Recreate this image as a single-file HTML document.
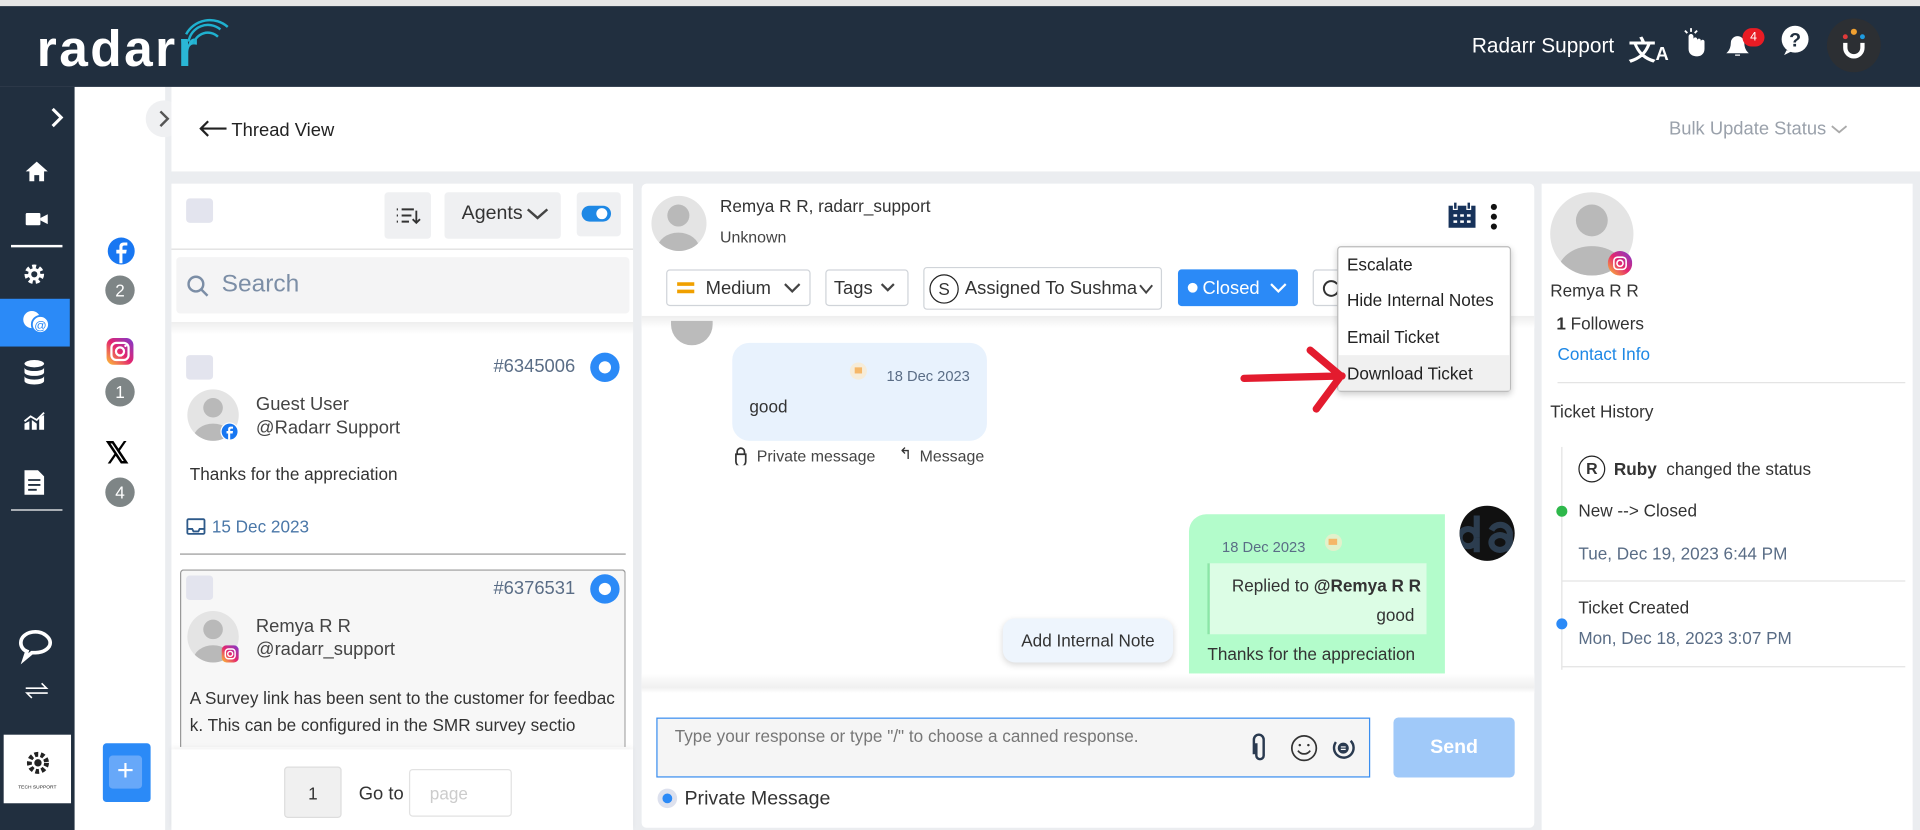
<!DOCTYPE html>
<html><head><meta charset="utf-8">
<style>
*{box-sizing:border-box;margin:0;padding:0}
html,body{width:1920px;height:830px;overflow:hidden;background:#ebedf0;font-family:"Liberation Sans",sans-serif}
#w{position:absolute;left:0;top:0;width:1568px;height:678px;transform:scale(1.22449);transform-origin:0 0;background:#ebedf0;color:#333}
.a{position:absolute}
.top{left:0;top:0;width:1568px;height:5px;background:#e6e6e6}
.hdr{left:0;top:5px;width:1568px;height:66px;background:#212f3f}
.side{left:0;top:71px;width:61px;height:607px;background:#212f3f}
.col2{left:61px;top:71px;width:74px;height:607px;background:#fff}
.bar{left:140px;top:71px;width:1428px;height:69px;background:#fff}
.panel{background:#fff}
.btn{border:1px solid #d0d4d9;border-radius:3px;background:#fff;height:30px;font-size:15px;display:flex;align-items:center;padding:0 6px}
.chk{width:22px;height:20px;background:#e3e4ee;border-radius:3px}
.radio{width:24px;height:24px;border-radius:50%;background:#2b8af7;display:flex;align-items:center;justify-content:center}
.radio i{width:10px;height:10px;border-radius:50%;background:#fff}
.av{border-radius:50%;background:#e4e4e4;overflow:hidden}
.badge{width:24px;height:24px;border-radius:50%;background:#7e8586;color:#fff;font-size:14px;text-align:center;line-height:24px}
</style></head><body><div id="w">
<div class="a top"></div>
<div class="a hdr"></div>
<div class="a" style="left:30px;top:18px;color:#fff;font-size:42px;font-weight:bold;letter-spacing:2px;line-height:44px">radar<span style="color:#2ab7d6">r</span></div>
<svg class="a" style="left:150px;top:14px" width="44" height="24"><path d="M4 20a16 16 0 0 1 26-10M8 22a12 12 0 0 1 20-6M2 14a22 22 0 0 1 34-6" stroke="#1fb1cf" stroke-width="2" fill="none"/></svg>
<div class="a" style="left:1202px;top:28px;color:#fff;font-size:17px">Radarr Support</div>
<div class="a" style="left:1330px;top:24px;color:#fff;font-size:22px;font-weight:bold">文<span style="font-size:15px">A</span></div>
<svg class="a" style="left:1373px;top:20px" width="22" height="28"><path d="M6 10v10c0 4 3 6 7 6s6-3 6-6v-6c0-2-3-2-3 0v-1c0-2-3-2-3 0v-1c0-2-3-2-3 0V10c0-3-4-3-4 0z" fill="#fff"/><path d="M8 3v3M3 5l2 2M13 5l-2 2" stroke="#fff" stroke-width="1.5"/></svg>
<svg class="a" style="left:1408px;top:24px" width="24" height="24"><path d="M3 19h16c-2-2-3-4-3-8a5 5 0 0 0-10 0c0 4-1 6-3 8zM9 21h4" fill="#fff" stroke="#fff"/></svg>
<div class="a" style="left:1423px;top:23px;width:18px;height:15px;border-radius:8px;background:#e91c24;color:#fff;font-size:10px;text-align:center;line-height:15px">4</div>
<svg class="a" style="left:1453px;top:20px" width="26" height="26"><circle cx="13" cy="12" r="11" fill="#fff"/><path d="M6 21l-2 4 6-3z" fill="#fff"/><text x="13" y="18" font-size="16" font-weight="bold" text-anchor="middle" fill="#212f3f" font-family="Liberation Sans">?</text></svg>
<div class="a" style="left:1492px;top:15px;width:44px;height:44px;border-radius:50%;background:#2c2f33"></div>
<svg class="a" style="left:1502px;top:22px" width="24" height="30"><circle cx="12" cy="4" r="2.5" fill="#f0a030"/><circle cx="5" cy="8" r="2" fill="#e03a3a"/><circle cx="19" cy="8" r="2" fill="#1e9be0"/><path d="M5 13v4a7 7 0 0 0 14 0v-4" stroke="#fff" stroke-width="3.5" fill="none"/></svg>

<div class="a side"></div>
<svg class="a" style="left:40px;top:86px" width="14" height="20"><path d="M3 3l7 7-7 7" stroke="#fff" stroke-width="2.5" fill="none"/></svg>
<svg class="a" style="left:20px;top:131px" width="20" height="18"><path d="M10 1L1 9h3v8h4v-5h4v5h4V9h3z" fill="#fff"/></svg>
<svg class="a" style="left:20px;top:172px" width="20" height="14"><rect x="1" y="2" width="12" height="10" rx="1" fill="#fff"/><path d="M13 6l6-3v8l-6-3z" fill="#fff"/></svg>
<div class="a" style="left:9px;top:200px;width:42px;height:2px;background:#fff"></div>
<svg class="a" style="left:18px;top:214px" width="20" height="20"><circle cx="10" cy="10" r="6" fill="none" stroke="#fff" stroke-width="4" stroke-dasharray="3 2.3"/><circle cx="10" cy="10" r="5" fill="#fff"/><circle cx="10" cy="10" r="2.5" fill="#212f3f"/></svg>
<div class="a" style="left:0;top:244px;width:57px;height:39px;background:#2b8af7"></div>
<svg class="a" style="left:17px;top:252px" width="26" height="22"><circle cx="9" cy="9" r="7" fill="#fff"/><circle cx="16" cy="13" r="7" fill="#fff" stroke="#2b8af7" stroke-width="1.5"/><text x="16" y="17" font-size="10" text-anchor="middle" fill="#2b8af7" font-family="Liberation Sans">@</text></svg>
<svg class="a" style="left:18px;top:293px" width="20" height="22"><ellipse cx="10" cy="4" rx="8" ry="3" fill="#fff"/><path d="M2 7c0 4 16 4 16 0v4c0 4-16 4-16 0zM2 14c0 4 16 4 16 0v4c0 4-16 4-16 0z" fill="#fff"/></svg>
<svg class="a" style="left:18px;top:333px" width="20" height="20"><path d="M2 18V13l4-2v7zM8 18V10l4 3v5zM14 18V8l4-2v12z" fill="#fff"/><path d="M2 11l5-4 5 3 6-6" stroke="#fff" stroke-width="1.5" fill="none"/></svg>
<svg class="a" style="left:19px;top:383px" width="18" height="22"><path d="M1 1h11l5 5v15H1z" fill="#fff"/><path d="M4 9h10M4 13h10M4 17h7" stroke="#212f3f" stroke-width="1.5"/></svg>
<div class="a" style="left:9px;top:416px;width:42px;height:1px;background:#fff"></div>
<svg class="a" style="left:14px;top:513px" width="30" height="30"><path d="M15 3C8 3 3 7 3 12c0 3 2 6 5 7l-2 6 6-5c1 0 2 0 3 0 7 0 12-4 12-8S22 3 15 3z" fill="none" stroke="#fff" stroke-width="3"/></svg>
<svg class="a" style="left:20px;top:556px" width="20" height="16"><path d="M1 6h17l-4-4M19 10H2l4 4" stroke="#fff" stroke-width="1.3" fill="none"/></svg>
<div class="a" style="left:3px;top:600px;width:55px;height:56px;background:#fff"></div>
<svg class="a" style="left:18px;top:610px" width="26" height="26"><circle cx="13" cy="13" r="7" fill="none" stroke="#222" stroke-width="4" stroke-dasharray="3 2"/><circle cx="13" cy="13" r="3" fill="#222"/></svg>
<div class="a" style="left:3px;top:640px;width:55px;text-align:center;font-size:4px;color:#222">TECH SUPPORT</div>

<div class="a col2"></div>
<div class="a" style="left:135px;top:71px;width:5px;height:607px;background:#ebedf0"></div>
<div class="a" style="left:119px;top:82px;width:30px;height:30px;border-radius:50%;background:#eff0f2"></div>
<svg class="a" style="left:127px;top:89px" width="14" height="16"><path d="M4 2l6 6-6 6" stroke="#555" stroke-width="2" fill="none"/></svg>
<svg class="a" style="left:87px;top:193px" width="24" height="24"><circle cx="12" cy="12" r="11" fill="#1877f2"/><path d="M13 22v-8h3l.5-3H13V9c0-1 .5-1.5 1.5-1.5H17V5h-3c-2.5 0-3.5 1.5-3.5 3.5V11H8v3h2.5v8z" fill="#fff"/></svg>
<div class="a badge" style="left:86px;top:225px">2</div>
<svg class="a" style="left:87px;top:276px" width="22" height="22"><defs><linearGradient id="ig" x1="0" y1="1" x2="1" y2="0"><stop offset="0" stop-color="#fdc435"/><stop offset=".5" stop-color="#e3266f"/><stop offset="1" stop-color="#7b3ad2"/></linearGradient></defs><rect width="22" height="22" rx="6" fill="url(#ig)"/><rect x="4" y="4" width="14" height="14" rx="4" fill="none" stroke="#fff" stroke-width="1.8"/><circle cx="11" cy="11" r="3.3" fill="none" stroke="#fff" stroke-width="1.8"/><circle cx="15.5" cy="6.5" r="1" fill="#fff"/></svg>
<div class="a badge" style="left:86px;top:308px">1</div>
<div class="a" style="left:86px;top:356px;font-size:24px;font-weight:bold;color:#000">𝕏</div>
<div class="a badge" style="left:86px;top:390px">4</div>
<div class="a" style="left:84px;top:607px;width:39px;height:48px;background:#2b8af7;border-radius:3px"></div>
<div class="a" style="left:89px;top:617px;width:27px;height:27px;background:#67a8f9;border-radius:3px;color:#fff;font-size:24px;text-align:center;line-height:26px">+</div>

<div class="a bar"></div>
<svg class="a" style="left:161px;top:98px" width="26" height="14"><path d="M24 7H3M9 1L3 7l6 6" stroke="#222" stroke-width="1.8" fill="none"/></svg>
<div class="a" style="left:189px;top:98px;font-size:15px;color:#222">Thread View</div>
<div class="a" style="left:1363px;top:97px;font-size:15px;color:#9aa1ab">Bulk Update Status</div>
<svg class="a" style="left:1494px;top:101px" width="16" height="10"><path d="M2 2l6 5 6-5" stroke="#aaa" stroke-width="1.5" fill="none"/></svg>

<div class="a panel" style="left:140px;top:150px;width:377px;height:528px"></div>
<div class="a chk" style="left:152px;top:162px"></div>
<div class="a" style="left:314px;top:157px;width:38px;height:38px;background:#eff0f2;border-radius:3px"></div>
<svg class="a" style="left:322px;top:168px" width="22" height="16"><path d="M2 3h1M6 3h10M2 8h1M6 8h8M2 13h1M6 13h6" stroke="#333" stroke-width="1.6"/><path d="M18 4v10M15 11l3 3 3-3" stroke="#333" stroke-width="1.5" fill="none"/></svg>
<div class="a" style="left:363px;top:157px;width:95px;height:38px;background:#eff0f2;border-radius:3px;font-size:16px;padding:9px 14px;color:#333">Agents</div>
<svg class="a" style="left:429px;top:168px" width="20" height="14"><path d="M2 3l8 7 8-7" stroke="#444" stroke-width="2" fill="none"/></svg>
<div class="a" style="left:471px;top:157px;width:36px;height:36px;background:#eff0f2;border-radius:3px"></div>
<div class="a" style="left:475px;top:168px;width:24px;height:13px;border-radius:7px;background:#1e88e5"></div>
<div class="a" style="left:487px;top:170px;width:9px;height:9px;border-radius:50%;background:#fff"></div>
<div class="a" style="left:140px;top:203px;width:377px;height:1px;background:#ddd"></div>
<div class="a" style="left:144px;top:210px;width:370px;height:46px;background:#f4f4f5;border-radius:3px"></div>
<svg class="a" style="left:152px;top:224px" width="20" height="20"><circle cx="8" cy="8" r="6" stroke="#7c8ea6" stroke-width="2" fill="none"/><path d="M12.5 12.5l5 5" stroke="#7c8ea6" stroke-width="2"/></svg>
<div class="a" style="left:181px;top:221px;font-size:20px;color:#7c8ea6">Search</div>
<div class="a" style="left:140px;top:263px;width:377px;height:10px;background:linear-gradient(#eee,#fff)"></div>

<div class="a chk" style="left:152px;top:290px"></div>
<div class="a" style="left:403px;top:291px;font-size:15px;color:#5a6d86">#6345006</div>
<div class="a radio" style="left:482px;top:288px"><i></i></div>
<div class="a av" style="left:153px;top:318px;width:42px;height:42px"><svg width="42" height="42"><circle cx="21" cy="15" r="8" fill="#b9b9b9"/><ellipse cx="21" cy="40" rx="16" ry="12" fill="#b9b9b9"/></svg></div>
<svg class="a" style="left:180px;top:345px" width="15" height="15"><circle cx="7.5" cy="7.5" r="7" fill="#1877f2" stroke="#fff"/><path d="M8 14V9h2l.3-2H8V6c0-.6.3-1 1-1h1.3V3.4H8.6C7 3.4 6.3 4.3 6.3 5.6V7H5v2h1.3v5z" fill="#fff"/></svg>
<div class="a" style="left:209px;top:321px;font-size:15px;color:#444;line-height:19px">Guest User<br>@Radarr Support</div>
<div class="a" style="left:155px;top:379px;font-size:14px;color:#333">Thanks for the appreciation</div>
<svg class="a" style="left:152px;top:422px" width="16" height="16"><rect x="1" y="2" width="14" height="12" rx="1" fill="none" stroke="#2e5a8a" stroke-width="1.5"/><path d="M1 10h4l1 2h4l1-2h4" stroke="#2e5a8a" stroke-width="1.5" fill="none"/></svg>
<div class="a" style="left:173px;top:422px;font-size:14px;color:#4a77a8">15 Dec 2023</div>
<div class="a" style="left:147px;top:452px;width:364px;height:1px;background:#999"></div>
<div class="a" style="left:147px;top:465px;width:364px;height:145px;border:1px solid #999;border-bottom:none;border-radius:3px 3px 0 0;background:#f7f7f7"></div>
<div class="a chk" style="left:152px;top:470px"></div>
<div class="a" style="left:403px;top:472px;font-size:15px;color:#5a6d86">#6376531</div>
<div class="a radio" style="left:482px;top:469px"><i></i></div>
<div class="a av" style="left:153px;top:499px;width:42px;height:42px"><svg width="42" height="42"><circle cx="21" cy="15" r="8" fill="#b9b9b9"/><ellipse cx="21" cy="40" rx="16" ry="12" fill="#b9b9b9"/></svg></div>
<svg class="a" style="left:181px;top:527px" width="14" height="14"><rect width="14" height="14" rx="4" fill="url(#ig)"/><rect x="3" y="3" width="8" height="8" rx="2.5" fill="none" stroke="#fff" stroke-width="1.2"/><circle cx="7" cy="7" r="2" fill="none" stroke="#fff" stroke-width="1.2"/></svg>
<div class="a" style="left:209px;top:502px;font-size:15px;color:#444;line-height:19px">Remya R R<br>@radarr_support</div>
<div class="a" style="left:155px;top:559px;font-size:14px;color:#333;line-height:22px;width:355px;word-break:break-all">A Survey link has been sent to the customer for feedback. This can be configured in the SMR survey sectio</div>
<div class="a" style="left:140px;top:612px;width:377px;height:66px;background:#fff;box-shadow:0 -2px 4px rgba(0,0,0,.05)"></div>
<div class="a" style="left:232px;top:626px;width:47px;height:42px;border:1px solid #ddd;background:#f0f0f0;border-radius:3px;text-align:center;line-height:42px;font-size:14px">1</div>
<div class="a" style="left:293px;top:640px;font-size:15px;color:#333">Go to</div>
<div class="a" style="left:334px;top:628px;width:84px;height:39px;border:1px solid #e2e2e2;border-radius:3px;font-size:14px;color:#ccc;padding:11px 16px">page</div>

<div class="a panel" style="left:524px;top:150px;width:729px;height:526px;border-radius:4px"></div>
<div class="a av" style="left:532px;top:160px;width:45px;height:45px"><svg width="45" height="45"><circle cx="22" cy="16" r="9" fill="#b9b9b9"/><ellipse cx="22" cy="43" rx="17" ry="13" fill="#b9b9b9"/></svg></div>
<div class="a" style="left:588px;top:160px;font-size:14px;color:#333">Remya R R, radarr_support</div>
<div class="a" style="left:588px;top:186px;font-size:13px;color:#444">Unknown</div>
<svg class="a" style="left:1182px;top:164px" width="26" height="24"><rect x="1" y="4" width="22" height="18" fill="#17325a"/><rect x="5" y="1" width="3" height="6" fill="#17325a" stroke="#fff"/><rect x="16" y="1" width="3" height="6" fill="#17325a" stroke="#fff"/><g fill="#fff"><rect x="5" y="11" width="3" height="2"/><rect x="10.5" y="11" width="3" height="2"/><rect x="16" y="11" width="3" height="2"/><rect x="5" y="16" width="3" height="2"/><rect x="10.5" y="16" width="3" height="2"/><rect x="16" y="16" width="3" height="2"/></g></svg>
<svg class="a" style="left:1216px;top:165px" width="8" height="24"><circle cx="4" cy="4" r="2.5" fill="#111"/><circle cx="4" cy="12" r="2.5" fill="#111"/><circle cx="4" cy="20" r="2.5" fill="#111"/></svg>
<div class="a btn" style="left:544px;top:220px;width:118px">
<svg width="20" height="16" style="margin-right:6px"><path d="M2 5h14M2 11h14" stroke="#f0a000" stroke-width="3"/></svg>Medium<svg width="18" height="12" style="margin-left:8px"><path d="M3 3l6 6 6-6" stroke="#444" stroke-width="1.8" fill="none"/></svg></div>
<div class="a btn" style="left:674px;top:220px;width:68px">Tags<svg width="16" height="12" style="margin-left:4px"><path d="M3 3l5 5 5-5" stroke="#444" stroke-width="1.8" fill="none"/></svg></div>
<div class="a btn" style="left:754px;top:218px;width:195px;height:35px;padding:0 4px"><span style="width:24px;height:24px;border:1.2px solid #222;border-radius:50%;text-align:center;line-height:22px;margin-right:5px;font-size:14px">S</span>Assigned To Sushma<svg width="14" height="12"><path d="M2 3l5 6 5-6" stroke="#444" stroke-width="1.6" fill="none"/></svg></div>
<div class="a" style="left:962px;top:220px;width:98px;height:30px;border-radius:3px;background:#2b8af7;color:#fff;font-size:15px;display:flex;align-items:center;padding-left:8px"><span style="width:8px;height:8px;border-radius:50%;background:#fff;margin-right:4px"></span>Closed<svg width="18" height="12" style="margin-left:6px"><path d="M3 3l6 6 6-6" stroke="#fff" stroke-width="1.8" fill="none"/></svg></div>
<div class="a btn" style="left:1072px;top:220px;width:30px"><svg width="16" height="16"><path d="M13 5a6 6 0 1 0 1 5" stroke="#333" stroke-width="1.6" fill="none"/></svg></div>
<div class="a" style="left:524px;top:258px;width:729px;height:10px;background:linear-gradient(#eee,#fff)"></div>
<div class="a" style="left:548px;top:262px;width:34px;height:20px;border-radius:0 0 17px 17px;background:#bbb"></div>
<div class="a" style="left:598px;top:280px;width:208px;height:80px;background:#e8f2fd;border-radius:14px"></div>
<div class="a" style="left:694px;top:296px;width:14px;height:14px;border-radius:50%;background:#f6ecd8"></div>
<div class="a" style="left:698px;top:300px;width:6px;height:5px;background:#f5b768"></div>
<div class="a" style="left:724px;top:300px;font-size:12px;color:#5a6d86">18 Dec 2023</div>
<div class="a" style="left:612px;top:324px;font-size:14px;color:#333">good</div>
<svg class="a" style="left:599px;top:364px" width="12" height="16"><path d="M3 7V5a3 3 0 0 1 6 0v2M2 7h8v6a3 3 0 0 1-8 0z" stroke="#333" stroke-width="1.4" fill="none"/></svg>
<div class="a" style="left:618px;top:365px;font-size:13px;color:#444">Private message</div>
<div class="a" style="left:734px;top:363px;font-size:13px;color:#333">↰</div>
<div class="a" style="left:751px;top:365px;font-size:13px;color:#444">Message</div>
<div class="a" style="left:1092px;top:201px;width:142px;height:119px;background:#fff;border:1px solid #bbb;border-radius:3px;box-shadow:0 2px 5px rgba(0,0,0,.2)"></div>
<div class="a" style="left:1100px;top:208px;font-size:14px;color:#222">Escalate</div>
<div class="a" style="left:1100px;top:237px;font-size:14px;color:#222">Hide Internal Notes</div>
<div class="a" style="left:1100px;top:267px;font-size:14px;color:#222">Email Ticket</div>
<div class="a" style="left:1093px;top:290px;width:140px;height:29px;background:#f0f0f0"></div>
<div class="a" style="left:1100px;top:297px;font-size:14px;color:#222">Download Ticket</div>
<svg class="a" style="left:1010px;top:280px" width="95" height="60"><path d="M6 29l80-2M60 6l25 21-20 27" stroke="#e31b2e" stroke-width="6" stroke-linecap="round" fill="none"/></svg>
<div class="a" style="left:971px;top:420px;width:209px;height:132px;background:#b3fccb;border-radius:14px 0 0 0"></div>
<div class="a" style="left:998px;top:440px;font-size:12px;color:#5a6d86">18 Dec 2023</div>
<div class="a" style="left:1082px;top:436px;width:14px;height:14px;border-radius:50%;background:#e2f1cb"></div>
<div class="a" style="left:1085px;top:440px;width:7px;height:5px;background:#f5b768"></div>
<div class="a" style="left:986px;top:460px;width:179px;height:58px;background:#dcfde5;border-left:2px solid #8be6a7"></div>
<div class="a" style="left:1006px;top:470px;font-size:14px;color:#333">Replied to <b>@Remya R R</b></div>
<div class="a" style="left:1124px;top:494px;font-size:14px;color:#333">good</div>
<div class="a" style="left:986px;top:526px;font-size:14px;color:#333">Thanks for the appreciation</div>
<div class="a" style="left:1192px;top:413px;width:45px;height:45px;border-radius:50%;background:#111;overflow:hidden"><svg width="45" height="45"><path d="M14 8v30M14 26a7 7 0 1 0 0 .1" stroke="#2c3d4f" stroke-width="5" fill="none"/><path d="M26 20a8 8 0 0 1 15 2v18M40 30a7 6 0 1 0 0 .1" stroke="#2c3d4f" stroke-width="5" fill="none"/></svg></div>
<div class="a" style="left:819px;top:505px;width:139px;height:36px;background:#eef5fd;border-radius:10px;box-shadow:0 2px 5px rgba(0,0,0,.15);font-size:14px;color:#333;text-align:center;line-height:36px">Add Internal Note</div>
<div class="a" style="left:524px;top:550px;width:729px;height:16px;background:linear-gradient(#fff,#f0f0f0 70%,#fff)"></div>
<div class="a" style="left:536px;top:586px;width:583px;height:49px;border:1px solid #3a8ef0;background:#f5f5f5"></div>
<div class="a" style="left:551px;top:593px;font-size:14px;color:#777">Type your response or type "/" to choose a canned response.</div>
<svg class="a" style="left:1022px;top:599px" width="14" height="24"><path d="M4 8v10a3 3 0 0 0 6 0V5a4 4 0 0 0-8 0v12" stroke="#2a3a50" stroke-width="2" fill="none"/></svg>
<svg class="a" style="left:1053px;top:599px" width="24" height="24"><circle cx="12" cy="12" r="10" stroke="#333" stroke-width="1.4" fill="none"/><circle cx="8.5" cy="9.5" r="1" fill="#333"/><circle cx="15.5" cy="9.5" r="1" fill="#333"/><path d="M7 14a6 6 0 0 0 10 0" stroke="#333" stroke-width="1.4" fill="none"/></svg>
<svg class="a" style="left:1086px;top:600px" width="22" height="22"><path d="M17 5a8 8 0 1 1-12 1" stroke="#2a3a50" stroke-width="2" fill="none"/><circle cx="11" cy="11" r="4.5" fill="#2a3a50"/><path d="M9 10h4M9 12h4" stroke="#fff"/></svg>
<div class="a" style="left:1138px;top:586px;width:99px;height:49px;background:#a0c9f9;border-radius:4px;color:#fff;font-weight:bold;font-size:16px;text-align:center;line-height:49px">Send</div>
<div class="a" style="left:537px;top:644px;width:16px;height:16px;border-radius:50%;background:#dde1ee"></div>
<div class="a" style="left:541px;top:648px;width:8px;height:8px;border-radius:50%;background:#2b8af7"></div>
<div class="a" style="left:559px;top:644px;font-size:16px;color:#333">Private Message</div>

<div class="a panel" style="left:1259px;top:150px;width:303px;height:528px"></div>
<div class="a av" style="left:1266px;top:157px;width:68px;height:68px"><svg width="68" height="68"><circle cx="34" cy="23" r="13" fill="#b9b9b9"/><ellipse cx="34" cy="66" rx="28" ry="22" fill="#b9b9b9"/></svg></div>
<svg class="a" style="left:1313px;top:205px" width="20" height="20"><circle cx="10" cy="10" r="10" fill="url(#ig)"/><rect x="5" y="5" width="10" height="10" rx="3" fill="none" stroke="#fff" stroke-width="1.3"/><circle cx="10" cy="10" r="2.5" fill="none" stroke="#fff" stroke-width="1.3"/></svg>
<div class="a" style="left:1266px;top:229px;font-size:14px;color:#333">Remya R R</div>
<div class="a" style="left:1271px;top:256px;font-size:14px;color:#333"><b>1</b> Followers</div>
<div class="a" style="left:1272px;top:281px;font-size:14px;color:#1e88e5">Contact Info</div>
<div class="a" style="left:1272px;top:312px;width:284px;height:1px;background:#e3e3e3"></div>
<div class="a" style="left:1266px;top:328px;font-size:14px;color:#333">Ticket History</div>
<div class="a" style="left:1275px;top:365px;width:1px;height:182px;background:#e3e3e3"></div>
<div class="a" style="left:1289px;top:372px;width:22px;height:22px;border:1.2px solid #222;border-radius:50%;font-size:13px;font-weight:bold;text-align:center;line-height:20px">R</div>
<div class="a" style="left:1318px;top:375px;font-size:14px;color:#333"><b>Ruby</b>&nbsp; changed the status</div>
<div class="a" style="left:1271px;top:413px;width:9px;height:9px;border-radius:50%;background:#2eb84b"></div>
<div class="a" style="left:1289px;top:409px;font-size:14px;color:#333">New --&gt; Closed</div>
<div class="a" style="left:1289px;top:444px;font-size:14px;color:#5a6d86">Tue, Dec 19, 2023 6:44 PM</div>
<div class="a" style="left:1276px;top:474px;width:280px;height:1px;background:#e3e3e3"></div>
<div class="a" style="left:1289px;top:488px;font-size:14px;color:#333">Ticket Created</div>
<div class="a" style="left:1271px;top:505px;width:9px;height:9px;border-radius:50%;background:#2b8af7"></div>
<div class="a" style="left:1289px;top:513px;font-size:14px;color:#5a6d86">Mon, Dec 18, 2023 3:07 PM</div>
<div class="a" style="left:1276px;top:544px;width:280px;height:1px;background:#e3e3e3"></div>
</div></body></html>
